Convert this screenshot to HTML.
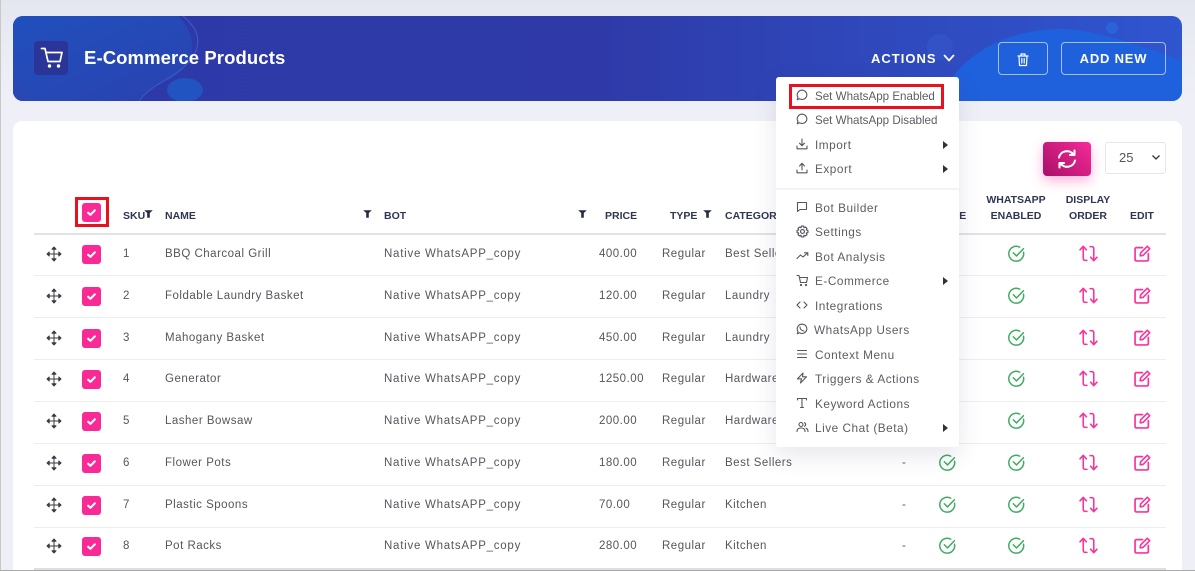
<!DOCTYPE html>
<html><head><meta charset="utf-8"><style>
*{box-sizing:border-box}
html,body{margin:0;padding:0;width:1195px;height:571px;overflow:hidden}
body{position:relative;background:linear-gradient(#e5e7f0,#eff0f7 100px);font-family:"Liberation Sans",sans-serif;color:#55565e}
.a,.r span,.r svg,.m div,.m svg,.h{position:absolute}
.edge{position:absolute;left:0;top:0;width:1px;height:571px;background:#c8c8c8}
.hero{position:absolute;left:13px;top:16px;width:1169px;height:85px;border-radius:10px;overflow:hidden;background:linear-gradient(90deg,#2c39a8 0,#2f3aa8 50%,#2f49bd 75%,#2f55cf 100%)}
.card{position:absolute;left:13px;top:121px;width:1169px;height:450px;background:#fff;border-radius:9px 9px 0 0}
.h{font-size:10.5px;font-weight:bold;color:#303650;letter-spacing:0;white-space:nowrap}
.c{text-align:center}
.ln{position:absolute;left:34px;width:1132px;height:1px;background:#eeeef0}
.r{position:absolute;left:0;width:1195px;height:20px;font-size:11.5px;letter-spacing:.5px;line-height:20px}
.r span{top:1px;white-space:nowrap}
.r span.b{letter-spacing:.75px}
.cb{width:19px;height:19px;background:#f92a96;border-radius:3px;position:absolute;left:82px}
.cb svg{position:absolute;left:5px;top:5px}
.m{position:absolute;left:776px;top:77px;width:183px;height:370px;background:#fff;border-radius:3px;box-shadow:0 8px 24px rgba(60,60,110,.13);font-size:11.8px;letter-spacing:.52px;color:#5c5d64}
.m div{left:39px;line-height:16px;white-space:nowrap}
.m svg{left:20px;fill:none;stroke:#55565e;stroke-width:1.1;stroke-linecap:round;stroke-linejoin:round}
.m i{position:absolute;left:167px;width:0;height:0;border-left:5px solid #333;border-top:4px solid transparent;border-bottom:4px solid transparent}
.red{position:absolute;border:3px solid #e9101f}
.btn{position:absolute;height:33px;border:1px solid rgba(255,255,255,.6);border-radius:4px}
</style></head><body>
<svg width="0" height="0" style="position:absolute"><defs>
<symbol id="mv" viewBox="0 0 16 16"><path d="M8 1v14M1 8h14M8 1L6 3.200h4zM8 15l-2-2.200h4zM1 8l2.200-2v4zM15 8l-2.200-2v4z" fill="#3a3a42" stroke="#3a3a42" stroke-width="1" stroke-linejoin="round"/></symbol>
<symbol id="tk" viewBox="0 0 9 9"><path d="M1.200 4.800L3.500 6.800 7.800 2.400" fill="none" stroke="#fff" stroke-width="2.100" stroke-linecap="round" stroke-linejoin="round"/></symbol>
<symbol id="ok" viewBox="0 0 16 16"><path d="M14.600 6.800A7 7 0 1 1 11 2" fill="none" stroke="#41ab64" stroke-width="1.400" stroke-linecap="round"/><path d="M5 7.300L8 10.300 14.500 3.500" fill="none" stroke="#41ab64" stroke-width="1.400" stroke-linecap="round" stroke-linejoin="round"/></symbol>
<symbol id="sw" viewBox="0 0 18 16"><path d="M1 4.500L4 1.200 7 4.500M4 1.500V12.500Q4 14.500 6 14.500H7.500M17 11.500L14 14.800 11 11.500M14 14.500V3.500Q14 1.500 12 1.500H10.500" fill="none" stroke="#f9359c" stroke-width="1.500" stroke-linecap="round" stroke-linejoin="round"/></symbol>
<symbol id="ed" viewBox="0 0 16 16"><path d="M8 2.500H2.500Q1 2.500 1 4V13.500Q1 15 2.500 15H12Q13.500 15 13.500 13.500V8" fill="none" stroke="#f9359c" stroke-width="1.600" stroke-linecap="round"/><path d="M12.500 1.200L14.800 3.500 8.500 9.800 5.800 10.200 6.200 7.500z" fill="none" stroke="#f9359c" stroke-width="1.500" stroke-linejoin="round"/></symbol>
<symbol id="ft" viewBox="0 0 9 8"><path d="M.2 .2H8.800L5.800 3V7.800H3.200V3z" fill="#252a45"/></symbol>
<symbol id="bb" viewBox="0 0 12 12"><path d="M6 1.200a4.800 4.600 0 1 1-2.500 8.500L1.300 10.800 2 8.300A4.800 4.600 0 0 1 6 1.200z"/></symbol>
</defs></svg>
<div class="edge"></div>
<div class="hero">
<svg class="a" style="left:0;top:0" width="1169" height="85" viewBox="0 0 1169 85"><defs><linearGradient id="g1" x1="0" y1="0" x2="1" y2="1"><stop offset="0" stop-color="#2050bd"/><stop offset="1" stop-color="#2a42b0"/></linearGradient></defs><path d="M0 0H165C185 20 185 45 160 62 142 70 130 76 125 85H0z" fill="url(#g1)"/><path d="M0 65Q15 75 25 85H0z" fill="#2a48b4"/><ellipse cx="172" cy="74" rx="18" ry="12" fill="#2154c0"/><path d="M925 85C945 40 990 13 1050 13 1090 13 1169 45 1169 45V85z" fill="#1f60dc"/><circle cx="1099" cy="12" r="6" fill="#2a62da"/><circle cx="927" cy="31" r="13" fill="#3352c6"/><path d="M126 85C140 65 172 60 183 35 188 20 182 10 170 0" fill="none" stroke="#3a5ccc" stroke-width="1"/></svg>
<div class="a" style="left:21px;top:25px;width:34px;height:34px;background:#2b3497;border-radius:4px"></div>
<svg class="a" style="left:27px;top:31px" width="23" height="22" viewBox="0 0 23 22"><path d="M1.500 1.500H5L8 14.500H20L22 5.500H6" fill="none" stroke="#fff" stroke-width="1.700" stroke-linecap="round" stroke-linejoin="round"/><circle cx="9.500" cy="19" r="1.700" fill="#fff"/><circle cx="18.500" cy="19" r="1.700" fill="#fff"/></svg>
<div class="a" style="left:71px;top:31px;font-size:18.500px;font-weight:bold;color:#fff;line-height:22px;white-space:nowrap;letter-spacing:.1px">E-Commerce Products</div>
<div class="a" style="left:858px;top:34px;font-size:13px;font-weight:bold;color:#fff;line-height:17px;letter-spacing:1px">ACTIONS</div>
<svg class="a" style="left:930px;top:38px" width="12" height="9" viewBox="0 0 12 9"><path d="M1.500 1.500L6 6.500 10.500 1.500" fill="none" stroke="#fff" stroke-width="1.700" stroke-linecap="round" stroke-linejoin="round"/></svg>
<div class="btn" style="left:985px;top:26px;width:50px"></div>
<svg class="a" style="left:1003px;top:36px" width="14" height="15" viewBox="0 0 14 15"><path d="M2 4H12M5 4V2H9V4M3 4L3.500 13.500H10.500L11 4M5.800 6.500V11M8.200 6.500V11" fill="none" stroke="#fff" stroke-width="1.200" stroke-linecap="round" stroke-linejoin="round"/></svg>
<div class="btn" style="left:1048px;top:26px;width:105px"></div>
<div class="a c" style="left:1048px;top:34px;width:105px;font-size:13px;font-weight:bold;color:#fff;line-height:17px;letter-spacing:.8px">ADD NEW</div>
</div>
<div class="card"></div>
<div class="a" style="left:1043px;top:142px;width:48px;height:34px;border-radius:4px;background:linear-gradient(45deg,#a90f68,#f52a99);box-shadow:0 5px 12px rgba(245,42,153,.35)"></div>
<svg class="a" style="left:1056px;top:149px" width="22" height="20" viewBox="0 0 22 20"><path d="M3 8.500A8 7.500 0 0 1 17.500 5.500M19 11.500A8 7.500 0 0 1 4.500 14.500M18.500 1.500V6H14M3.500 18.500V14H8" fill="none" stroke="#fff" stroke-width="2.100" stroke-linecap="round" stroke-linejoin="round"/></svg>
<div class="a" style="left:1105px;top:142px;width:61px;height:32px;border:1px solid #e6e6ea;border-radius:3px"></div>
<div class="a" style="left:1119px;top:150px;font-size:13px;line-height:16px;color:#55565e">25</div>
<svg class="a" style="left:1151px;top:154px" width="10" height="7" viewBox="0 0 10 7"><path d="M1.500 1.500L5 5 8.500 1.500" fill="none" stroke="#333" stroke-width="1.300"/></svg>

<div class="cb" style="top:203px"><svg width="9" height="9"><use href="#tk"/></svg></div>
<div class="red" style="left:75px;top:197px;width:34px;height:30px"></div>
<div class="h" style="left:123px;top:210px">SKU</div><svg class="a" style="left:144px;top:210px" width="9" height="8"><use href="#ft"/></svg>
<div class="h" style="left:165px;top:210px">NAME</div><svg class="a" style="left:363px;top:210px" width="9" height="8"><use href="#ft"/></svg>
<div class="h" style="left:384px;top:210px">BOT</div><svg class="a" style="left:578px;top:210px" width="9" height="8"><use href="#ft"/></svg>
<div class="h" style="left:605px;top:210px">PRICE</div>
<div class="h" style="left:670px;top:210px">TYPE</div><svg class="a" style="left:703px;top:210px" width="9" height="8"><use href="#ft"/></svg>
<div class="h" style="left:725px;top:210px">CATEGORY</div>
<div class="h c" style="left:927px;top:210px;width:40px">ACTIVE</div>
<div class="h c" style="left:976px;top:194px;width:80px">WHATSAPP</div><div class="h c" style="left:976px;top:210px;width:80px">ENABLED</div>
<div class="h c" style="left:1058px;top:194px;width:60px">DISPLAY</div><div class="h c" style="left:1058px;top:210px;width:60px">ORDER</div>
<div class="h c" style="left:1122px;top:210px;width:40px">EDIT</div>
<div class="ln" style="top:233px;height:2px;background:#e2e2e4"></div>
<div class="ln" style="top:275px"></div><div class="ln" style="top:317px"></div><div class="ln" style="top:359px"></div><div class="ln" style="top:401px"></div><div class="ln" style="top:443px"></div><div class="ln" style="top:485px"></div><div class="ln" style="top:527px"></div>
<div class="ln" style="top:568px;height:2px;background:#dfdfe1"></div>
<div class="a" style="left:0;top:570px;width:1195px;height:1px;background:#a9a9ab"></div>

<div class="r" style="top:243px"><svg style="left:46px;top:3px" width="16" height="16"><use href="#mv"/></svg><div class="cb" style="top:2px"><svg width="9" height="9"><use href="#tk"/></svg></div><span style="left:123px">1</span><span style="left:165px">BBQ Charcoal Grill</span><span class="b" style="left:384px">Native WhatsAPP_copy</span><span style="left:599px">400.00</span><span style="left:662px">Regular</span><span style="left:725px">Best Sellers</span><svg style="left:1008px;top:2px" width="17" height="17"><use href="#ok"/></svg><svg style="left:1079px;top:2px" width="19" height="17"><use href="#sw"/></svg><svg style="left:1134px;top:2px" width="17" height="17"><use href="#ed"/></svg></div>
<div class="r" style="top:285px"><svg style="left:46px;top:3px" width="16" height="16"><use href="#mv"/></svg><div class="cb" style="top:2px"><svg width="9" height="9"><use href="#tk"/></svg></div><span style="left:123px">2</span><span style="left:165px">Foldable Laundry Basket</span><span class="b" style="left:384px">Native WhatsAPP_copy</span><span style="left:599px">120.00</span><span style="left:662px">Regular</span><span style="left:725px">Laundry</span><svg style="left:1008px;top:2px" width="17" height="17"><use href="#ok"/></svg><svg style="left:1079px;top:2px" width="19" height="17"><use href="#sw"/></svg><svg style="left:1134px;top:2px" width="17" height="17"><use href="#ed"/></svg></div>
<div class="r" style="top:327px"><svg style="left:46px;top:3px" width="16" height="16"><use href="#mv"/></svg><div class="cb" style="top:2px"><svg width="9" height="9"><use href="#tk"/></svg></div><span style="left:123px">3</span><span style="left:165px">Mahogany Basket</span><span class="b" style="left:384px">Native WhatsAPP_copy</span><span style="left:599px">450.00</span><span style="left:662px">Regular</span><span style="left:725px">Laundry</span><svg style="left:1008px;top:2px" width="17" height="17"><use href="#ok"/></svg><svg style="left:1079px;top:2px" width="19" height="17"><use href="#sw"/></svg><svg style="left:1134px;top:2px" width="17" height="17"><use href="#ed"/></svg></div>
<div class="r" style="top:368px"><svg style="left:46px;top:3px" width="16" height="16"><use href="#mv"/></svg><div class="cb" style="top:2px"><svg width="9" height="9"><use href="#tk"/></svg></div><span style="left:123px">4</span><span style="left:165px">Generator</span><span class="b" style="left:384px">Native WhatsAPP_copy</span><span style="left:599px">1250.00</span><span style="left:662px">Regular</span><span style="left:725px">Hardware</span><svg style="left:1008px;top:2px" width="17" height="17"><use href="#ok"/></svg><svg style="left:1079px;top:2px" width="19" height="17"><use href="#sw"/></svg><svg style="left:1134px;top:2px" width="17" height="17"><use href="#ed"/></svg></div>
<div class="r" style="top:410px"><svg style="left:46px;top:3px" width="16" height="16"><use href="#mv"/></svg><div class="cb" style="top:2px"><svg width="9" height="9"><use href="#tk"/></svg></div><span style="left:123px">5</span><span style="left:165px">Lasher Bowsaw</span><span class="b" style="left:384px">Native WhatsAPP_copy</span><span style="left:599px">200.00</span><span style="left:662px">Regular</span><span style="left:725px">Hardware</span><svg style="left:1008px;top:2px" width="17" height="17"><use href="#ok"/></svg><svg style="left:1079px;top:2px" width="19" height="17"><use href="#sw"/></svg><svg style="left:1134px;top:2px" width="17" height="17"><use href="#ed"/></svg></div>
<div class="r" style="top:452px"><svg style="left:46px;top:3px" width="16" height="16"><use href="#mv"/></svg><div class="cb" style="top:2px"><svg width="9" height="9"><use href="#tk"/></svg></div><span style="left:123px">6</span><span style="left:165px">Flower Pots</span><span class="b" style="left:384px">Native WhatsAPP_copy</span><span style="left:599px">180.00</span><span style="left:662px">Regular</span><span style="left:725px">Best Sellers</span><span style="left:902px">-</span><svg style="left:939px;top:2px" width="17" height="17"><use href="#ok"/></svg><svg style="left:1008px;top:2px" width="17" height="17"><use href="#ok"/></svg><svg style="left:1079px;top:2px" width="19" height="17"><use href="#sw"/></svg><svg style="left:1134px;top:2px" width="17" height="17"><use href="#ed"/></svg></div>
<div class="r" style="top:494px"><svg style="left:46px;top:3px" width="16" height="16"><use href="#mv"/></svg><div class="cb" style="top:2px"><svg width="9" height="9"><use href="#tk"/></svg></div><span style="left:123px">7</span><span style="left:165px">Plastic Spoons</span><span class="b" style="left:384px">Native WhatsAPP_copy</span><span style="left:599px">70.00</span><span style="left:662px">Regular</span><span style="left:725px">Kitchen</span><span style="left:902px">-</span><svg style="left:939px;top:2px" width="17" height="17"><use href="#ok"/></svg><svg style="left:1008px;top:2px" width="17" height="17"><use href="#ok"/></svg><svg style="left:1079px;top:2px" width="19" height="17"><use href="#sw"/></svg><svg style="left:1134px;top:2px" width="17" height="17"><use href="#ed"/></svg></div>
<div class="r" style="top:535px"><svg style="left:46px;top:3px" width="16" height="16"><use href="#mv"/></svg><div class="cb" style="top:2px"><svg width="9" height="9"><use href="#tk"/></svg></div><span style="left:123px">8</span><span style="left:165px">Pot Racks</span><span class="b" style="left:384px">Native WhatsAPP_copy</span><span style="left:599px">280.00</span><span style="left:662px">Regular</span><span style="left:725px">Kitchen</span><span style="left:902px">-</span><svg style="left:939px;top:2px" width="17" height="17"><use href="#ok"/></svg><svg style="left:1008px;top:2px" width="17" height="17"><use href="#ok"/></svg><svg style="left:1079px;top:2px" width="19" height="17"><use href="#sw"/></svg><svg style="left:1134px;top:2px" width="17" height="17"><use href="#ed"/></svg></div>

<div class="m">
<svg style="top:12px" width="12" height="12" viewBox="0 0 12 12"><use href="#bb"/></svg><div style="top:12px;letter-spacing:0;font-size:11.6px">Set WhatsApp Enabled</div>
<svg style="top:36px" width="12" height="12" viewBox="0 0 12 12"><use href="#bb"/></svg><div style="top:36px;letter-spacing:0;font-size:11.6px">Set WhatsApp Disabled</div>
<svg style="top:61px" width="12" height="12" viewBox="0 0 12 12"><path d="M6 1V7.500M3.500 5.200L6 7.700 8.500 5.200M1 8V10.800H11V8"/></svg><div style="top:60px">Import</div><i style="top:64px"></i>
<svg style="top:85px" width="12" height="12" viewBox="0 0 12 12"><path d="M6 8V1.500M3.500 4L6 1.300 8.500 4M1 8V10.800H11V8"/></svg><div style="top:84px">Export</div><i style="top:88px"></i>
<p style="position:absolute;left:0;top:111px;width:183px;height:2px;margin:0;background:#f3f3f5"></p>
<svg style="top:124px" width="12" height="12" viewBox="0 0 12 12"><path d="M1.500 1.500H10.500V8.500H4L1.500 10.500z"/></svg><div style="top:123px">Bot Builder</div>
<svg style="top:148px" width="13" height="13" viewBox="0 0 12 12"><circle cx="6" cy="6" r="1.800"/><path d="M5 1H7L7.400 2.500 8.800 1.900 10.100 3.200 9.500 4.600 11 5V7L9.500 7.400 10.100 8.800 8.800 10.100 7.400 9.500 7 11H5L4.600 9.500 3.200 10.100 1.900 8.800 2.500 7.400 1 7V5L2.500 4.600 1.900 3.200 3.200 1.900 4.600 2.500z"/></svg><div style="top:147px">Settings</div>
<svg style="top:173px" width="13" height="12" viewBox="0 0 13 12"><path d="M1 8.500L4.500 5 7 7 11.500 3M8.500 2.800H11.800V5.500"/></svg><div style="top:172px">Bot Analysis</div>
<svg style="top:197px" width="13" height="13" viewBox="0 0 13 13"><path d="M1 1.500H3L4.500 8.500H10.500L11.500 3.500H3.500"/><circle cx="5" cy="11" r=".6"/><circle cx="10" cy="11" r=".6"/></svg><div style="top:196px">E-Commerce</div><i style="top:200px"></i>
<svg style="top:222px" width="12" height="12" viewBox="0 0 12 12"><path d="M4 3L1 6 4 9M8 3L11 6 8 9"/></svg><div style="top:221px">Integrations</div>
<svg style="top:246px" width="12" height="12" viewBox="0 0 12 12"><use href="#bb"/><path d="M4 4Q4.200 7.500 8 8"/></svg><div style="top:245px;left:38px">WhatsApp Users</div>
<svg style="top:271px" width="12" height="12" viewBox="0 0 12 12"><path d="M1.500 2.500H10.500M1.500 6H10.500M1.500 9.500H10.500"/></svg><div style="top:270px">Context Menu</div>
<svg style="top:295px" width="12" height="12" viewBox="0 0 12 12"><path d="M7 1L1.500 6.800H5.500L4.500 11 10.500 4.800H6.500z"/></svg><div style="top:294px">Triggers &amp; Actions</div>
<svg style="top:320px" width="12" height="12" viewBox="0 0 12 12"><path d="M1.500 3V1.500H10.500V3M6 1.500V10.500M4.500 10.500H7.500"/></svg><div style="top:319px">Keyword Actions</div>
<svg style="top:344px" width="13" height="12" viewBox="0 0 13 12"><circle cx="5" cy="3.500" r="2"/><path d="M1 10.500Q1 7 5 7T9 10.500M8.500 1.700A2 2 0 0 1 8.500 5.300M10 7.300Q12 8 12 10.500"/></svg><div style="top:343px">Live Chat (Beta)</div><i style="top:347px"></i>
</div>
<div class="red" style="left:789px;top:84px;width:155px;height:25px"></div>
</body></html>
